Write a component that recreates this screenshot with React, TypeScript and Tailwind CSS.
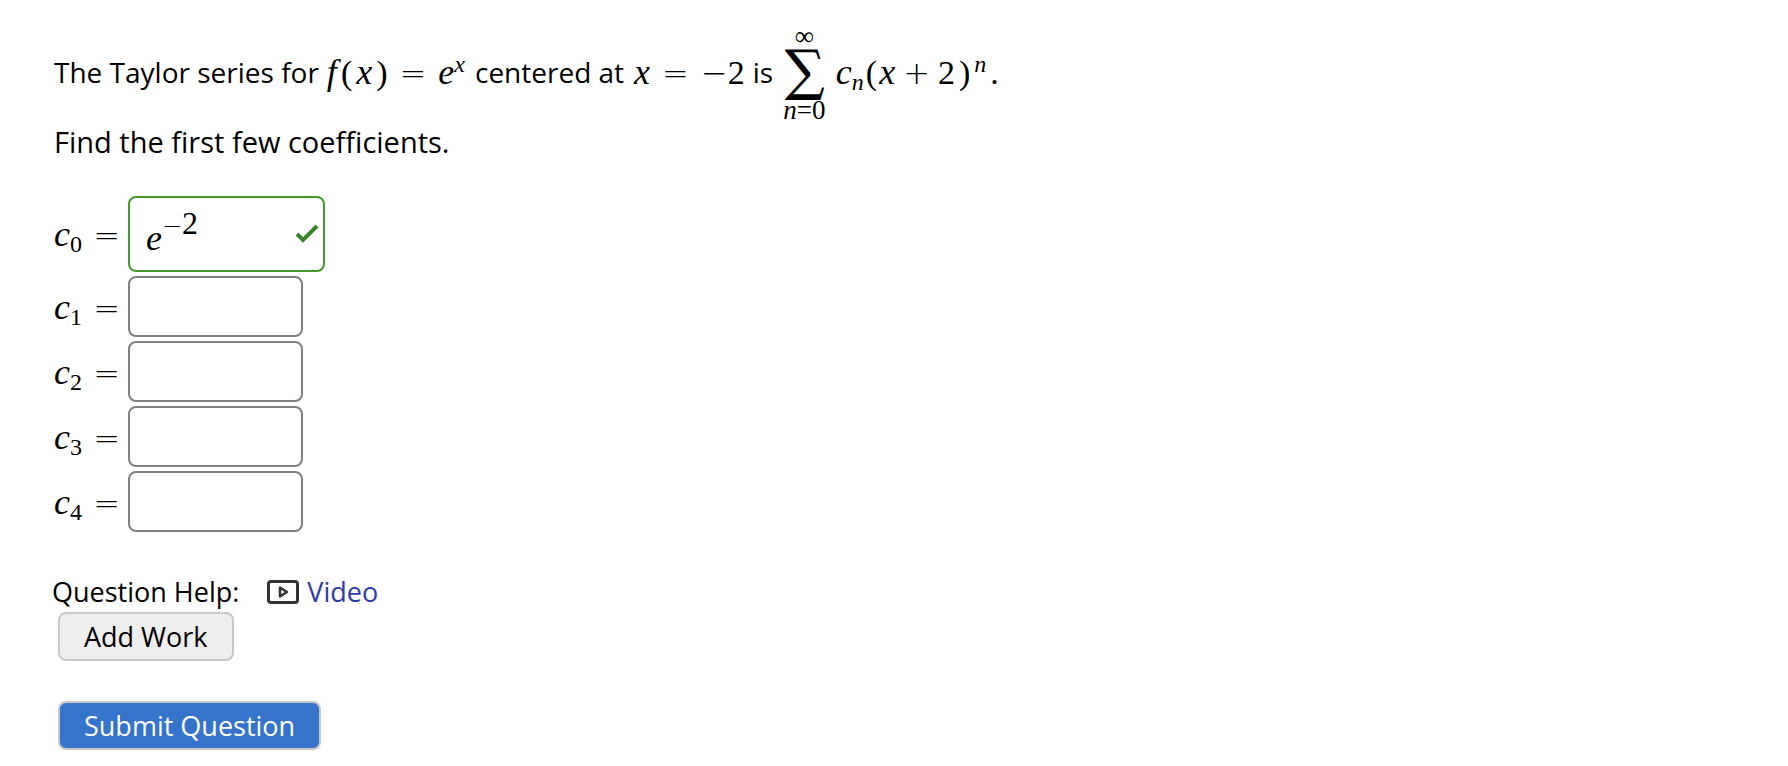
import { useState } from "react";
import type { ReactNode } from "react";

// Italic variable in a formula
function Var({ children }: { children: ReactNode }) {
  return (
    <i className="font-['Liberation_Serif',serif] text-[36px]">{children}</i>
  );
}

function Num({ children }: { children: ReactNode }) {
  return (
    <span className="font-['Liberation_Serif',serif] text-[34px]">
      {children}
    </span>
  );
}

// Relation or binary operator
function Op({ children }: { children: ReactNode }) {
  return (
    <span className="font-['DejaVu_Sans',sans-serif] text-[32px] font-extralight">
      {children}
    </span>
  );
}

function Coefficient({ index }: { index: number }) {
  return (
    <span className="flex w-[66px] items-baseline justify-between leading-none">
      <span>
        <Var>c</Var>
        <sub className="font-['Liberation_Serif',serif] text-[24px]">
          {index}
        </sub>
      </span>
      <Op>=</Op>
    </span>
  );
}

export default function App() {
  const [answers, setAnswers] = useState(["", "", "", ""]);

  const updateAnswer = (position: number, value: string) => {
    setAnswers((prev) => prev.map((a, i) => (i === position ? value : a)));
  };

  return (
    <main className="min-h-screen bg-white px-[54px] pt-6 font-['Open_Sans',sans-serif] text-[27px] leading-10 text-black">
      {/* Question text */}
      <div className="flex items-center gap-2 whitespace-nowrap text-[28px] leading-none">
        <span>The Taylor series for</span>
        <span className="flex items-baseline gap-3">
          <span className="flex items-baseline gap-1">
            <Var>f</Var>
            <Num>(</Num>
            <Var>x</Var>
            <Num>)</Num>
          </span>
          <Op>=</Op>
          <span>
            <Var>e</Var>
            <sup className="font-['Liberation_Serif',serif] text-[24px] italic">
              x
            </sup>
          </span>
        </span>
        <span className="px-0.5">centered at</span>
        <span className="flex items-baseline gap-3">
          <Var>x</Var>
          <Op>=</Op>
          <span>
            <Op>−</Op>
            <Num>2</Num>
          </span>
        </span>
        <span>is</span>
        <span className="flex flex-col items-center font-['Liberation_Serif',serif] text-[27px]">
          <span className="leading-6">∞</span>
          <span className="font-['DejaVu_Math_TeX_Gyre','DejaVu_Serif',serif] text-[48px] leading-[52px]">
            ∑
          </span>
          <span className="leading-5">
            <i>n</i>=0
          </span>
        </span>
        <span className="flex items-baseline gap-2">
          <span className="flex items-baseline gap-0.5">
            <span>
              <Var>c</Var>
              <sub className="font-['Liberation_Serif',serif] text-[24px] italic">
                n
              </sub>
            </span>
            <Num>(</Num>
            <Var>x</Var>
          </span>
          <Op>+</Op>
          <span className="flex items-baseline gap-1">
            <Num>2</Num>
            <Num>)</Num>
            <sup className="font-['Liberation_Serif',serif] text-[24px] italic">
              n
            </sup>
            <Num>.</Num>
          </span>
        </span>
      </div>
      <p className="mt-1 text-[29px] leading-9">
        Find the first few coefficients.
      </p>

      {/* Answers */}
      <div className="mt-9 flex flex-col gap-1">
        <div className="flex items-center gap-2">
          <Coefficient index={0} />
          <div
            role="textbox"
            aria-label="c0"
            tabIndex={0}
            className="flex h-[76px] w-[197px] items-center justify-between rounded-lg border-2 border-[#439a2b] pr-1 pl-4"
          >
            <span className="pt-2 font-['Liberation_Serif',serif] text-[32px] leading-none">
              <Var>e</Var>
              <sup className="text-[32px]">
                <span className="font-['DejaVu_Sans',sans-serif] text-[24px] font-extralight">
                  −
                </span>
                2
              </sup>
            </span>
            <svg width="24" height="20" viewBox="0 0 24 20" fill="none">
              <path d="M2 10l6 6L22 2" stroke="#37842a" strokeWidth="4" />
            </svg>
          </div>
        </div>
        {answers.map((answer, i) => (
          <label key={i} className="flex items-center gap-2">
            <Coefficient index={i + 1} />
            <input
              type="text"
              value={answer}
              onChange={(e) => updateAnswer(i, e.target.value)}
              className="h-[61px] w-[175px] rounded-lg border-2 border-[#808080] px-3"
            />
          </label>
        ))}
      </div>

      {/* Help */}
      <div className="mt-10 -ml-0.5 flex items-center">
        <span>Question Help:</span>
        <a href="#video" className="ml-7 flex items-center gap-2 text-[#2f3aa8]">
          <svg width="32" height="24" viewBox="0 0 32 24" fill="none">
            <rect x="1.5" y="1.5" width="29" height="21" rx="2.5" stroke="#333" strokeWidth="3" />
            <path d="M13 7.5v9l7-4.500z" stroke="#333" strokeWidth="2.500" strokeLinejoin="round" />
          </svg>
          Video
        </a>
      </div>
      <div className="ml-1 flex flex-col items-start gap-10">
        <button
          type="button"
          className="flex h-[49px] items-center rounded-lg border-2 border-[#c8c8c8] bg-[#eee] px-6"
        >
          Add Work
        </button>
        <button
          type="submit"
          className="flex h-[49px] items-center rounded-lg border-2 border-[#c8c8c8] bg-[#3673cb] px-6 text-white"
        >
          Submit Question
        </button>
      </div>
    </main>
  );
}
